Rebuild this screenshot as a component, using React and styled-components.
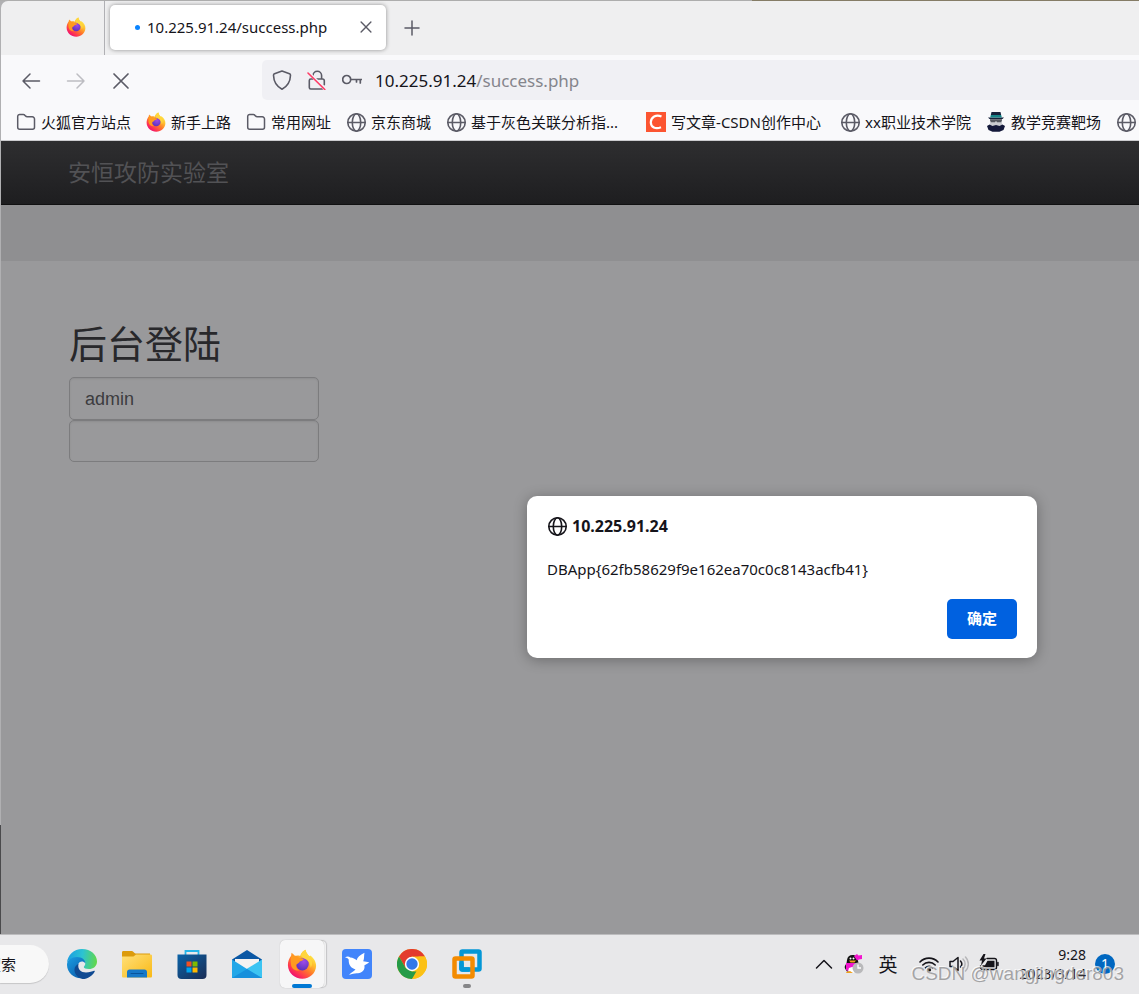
import React, { useId } from 'react';
import styled, { createGlobalStyle } from 'styled-components';

const GlobalStyle = createGlobalStyle`
  :root {
    --font-ui: "Noto Sans", "Noto Sans CJK SC", sans-serif;
    --font-page: "Liberation Sans", "Noto Sans CJK SC", sans-serif;
    --color-ink: #15141a;
    --color-icon: #5b5b66;
    --color-toolbar: #f9f9fb;
  }

  * {
    box-sizing: border-box;
  }

  body {
    margin: 0;
    font-family: var(--font-ui);
    font-size: 15px;
    color: var(--color-ink);
  }

  button,
  input {
    font-family: inherit;
    font-size: inherit;
    color: inherit;
  }

  svg {
    display: block;
    flex: none;
  }
`;

/* the windows behind show through the 1px transparent window border */
const Desktop = styled.div`
  display: flex;
  flex-direction: column;
  height: 100vh;
  overflow: hidden;
  background:
    linear-gradient(90deg, #adadad 66%, #857c66 66%) top / 100% 1px no-repeat,
    linear-gradient(#b0b0b2 83%, #4a4a4c 83%);
`;

const BrowserWindow = styled.div`
  flex: 1;
  display: flex;
  flex-direction: column;
  min-height: 0;
  border-top: 1px solid transparent;
  border-left: 1px solid transparent;
  border-top-left-radius: 8px;
  overflow: hidden;
`;

const TabBar = styled.div`
  display: flex;
  height: 54px;
  background: #efeff0;
`;

const PinnedTab = styled.button`
  display: flex;
  align-items: center;
  justify-content: flex-end;
  width: 104px;
  padding: 0 18px 2px 0;
  border: 0;
  border-right: 1px solid #b0b0b4;
  background: none;
`;

const Tab = styled.div`
  display: flex;
  align-items: center;
  width: 276px;
  margin: 4px 5px 5px;
  padding: 0 12px 1px 25px;
  border-radius: 5px;
  background: #fff;
  box-shadow: 0 0 4px rgba(0, 0, 0, 0.4);
`;

const LoadingDot = styled.span`
  width: 5px;
  height: 5px;
  margin-right: 7px;
  border-radius: 50%;
  background: #0a84ff;
`;

const TabTitle = styled.span`
  flex: 1;
  white-space: nowrap;
`;

const IconButton = styled.button`
  display: flex;
  align-items: center;
  justify-content: center;
  width: ${props => props.$size || 40}px;
  padding: 0;
  border: 0;
  background: none;
  color: ${props => (props.disabled ? '#bdbdc2' : 'var(--color-icon)')};
`;

const NavBar = styled.div`
  display: flex;
  height: 50px;
  padding: 5px 0 5px 10px;
  background: var(--color-toolbar);
`;

const NavButtons = styled.div`
  display: flex;
  gap: 5px;
  width: 251px;
  padding-top: 2px;
`;

const UrlBar = styled.div`
  flex: 1;
  display: flex;
  align-items: center;
  gap: 15px;
  padding-left: 10px;
  border-radius: 5px 0 0 5px;
  background: #f0f0f4;
  color: var(--color-icon);
`;

const UrlText = styled.div`
  margin-left: -2px;
  font-size: 17px;
  color: #85858c;

  strong {
    font-weight: 400;
    color: var(--color-ink);
  }
`;

const Bookmarks = styled.nav`
  display: flex;
  gap: 15px;
  height: 36px;
  padding: 0 0 2px 15px;
  border-bottom: 1px solid #cccccf;
  background: var(--color-toolbar);
  overflow: hidden;
`;

const Bookmark = styled.a`
  flex: none;
  display: flex;
  align-items: center;
  gap: 5px;
  min-width: ${props => props.$width || 0}px;
  color: var(--color-ink);
  text-decoration: none;
  white-space: nowrap;

  svg {
    color: var(--color-icon);
  }
`;

const Page = styled.main`
  position: relative;
  flex: 1;
  background: #99999b;
  font-family: var(--font-page);
`;

const SiteHeader = styled.header`
  display: flex;
  align-items: center;
  height: 64px;
  padding: 0 67px 4px;
  border-bottom: 1px solid #111112;
  background: linear-gradient(#2e2e30, #1e1e20);
`;

const Brand = styled.a`
  font-size: 23px;
  color: #525255;
  text-decoration: none;
`;

const SubHeader = styled.div`
  height: 56px;
  background: #8f8f91;
`;

const LoginForm = styled.form`
  display: flex;
  flex-direction: column;
  align-items: flex-start;
  padding: 55px 68px;
`;

const LoginTitle = styled.h1`
  margin: 0 0 2px;
  font-size: 38px;
  font-weight: 400;
  line-height: 59px;
  color: #28282b;
`;

const LoginInput = styled.input`
  width: 250px;
  height: ${props => props.$height || 42}px;
  padding: 2px 15px 0;
  border: 1px solid #7c7c7e;
  border-radius: 5px;
  outline: 0;
  background: #99999b;
  box-shadow: inset 0 1px 2px rgba(0, 0, 0, 0.08);
  font-size: 18px;
  color: #3c3c3f;
`;

const DialogLayer = styled.div`
  position: absolute;
  inset: 0;
  display: flex;
  align-items: flex-start;
  justify-content: flex-end;
  padding: 355px 102px 0 0;
`;

const Dialog = styled.div`
  width: 510px;
  padding: 18px 20px 19px;
  border-radius: 10px;
  background: #fff;
  box-shadow: 0 2px 14px rgba(0, 0, 0, 0.3);
  font-family: var(--font-ui);
`;

const DialogTitle = styled.h2`
  display: flex;
  align-items: center;
  gap: 5px;
  margin: 0;
  font-size: 16px;
  line-height: 24px;
`;

const DialogMessage = styled.p`
  margin: 19px 0 18px;
  line-height: 24px;
`;

const DialogActions = styled.div`
  display: flex;
  justify-content: flex-end;
`;

const PrimaryButton = styled.button`
  width: 70px;
  height: 40px;
  padding: 0 0 4px;
  border: 0;
  border-radius: 5px;
  background: #0061e0;
  color: #fff;
  font-weight: 700;
`;

const Taskbar = styled.footer`
  position: relative;
  display: flex;
  align-items: center;
  height: 60px;
  padding-bottom: 2px;
  border-top: 1px solid #bcbcbe;
  background: #e8e8ea;
`;

const SearchPill = styled.button`
  display: flex;
  justify-content: flex-end;
  align-items: center;
  width: 49px;
  height: 38px;
  margin-right: 11px;
  padding: 0 33px 0 0;
  border: 0;
  border-radius: 0 19px 19px 0;
  background: #f8f8f8;
  box-shadow: 0 1px 1px rgba(0, 0, 0, 0.15);
  overflow: hidden;
  white-space: nowrap;
`;

const TaskList = styled.div`
  flex: 1;
  display: flex;
  gap: 11px;
`;

const TaskButton = styled.button`
  position: relative;
  display: flex;
  align-items: center;
  justify-content: center;
  width: 44px;
  height: 48px;
  padding: 0;
  border: 0;
  border-radius: 5px;
  background: ${props => (props.$active ? '#f6f6f7' : 'none')};
  box-shadow: ${props => (props.$active ? '0 0 1px #aaa, 3px 0 0 -1px #f0f0f1, 3px 0 1px #c4c4c6' : 'none')};

  &::after {
    content: "";
    display: ${props => (props.$active || props.$open ? 'block' : 'none')};
    position: absolute;
    bottom: 0;
    width: ${props => (props.$active ? 20 : 8)}px;
    height: 4px;
    border-radius: 2px;
    background: ${props => (props.$active ? '#0078d4' : '#868688')};
  }
`;

const Tray = styled.div`
  display: flex;
  align-items: center;
  padding-right: 24px;
`;

const TrayIcons = styled.div`
  display: flex;
  align-items: center;
  gap: 10px;
  margin-right: 21px;
`;

const InputMode = styled.span`
  margin: 0 11px 0 5px;
  font-size: 19px;
`;

const Clock = styled.time`
  margin-right: 9px;
  font-size: 14px;
  line-height: 19px;
  text-align: right;
`;

const NoticeBadge = styled.span`
  width: 20px;
  height: 20px;
  border-radius: 50%;
  background: #0067c0;
  color: #fff;
  font-size: 14px;
  line-height: 20px;
  text-align: center;
`;

const Watermark = styled.span`
  position: absolute;
  right: 15px;
  bottom: 8px;
  font-family: var(--font-page);
  font-size: 19px;
  line-height: 24px;
  color: rgba(150, 150, 152, 0.85);
  text-shadow: -1px -1px 0 rgba(255, 255, 255, 0.7);
`;

const Line = ({ size = 20, children, stroke = 1.5 }) => (
  <svg
    width={size}
    height={size}
    viewBox="0 0 20 20"
    fill="none"
    stroke="currentColor"
    strokeWidth={stroke}
    strokeLinecap="round"
    strokeLinejoin="round"
    aria-hidden="true"
  >
    {children}
  </svg>
);

const GlobeIcon = () => (
  <Line stroke={1.6}>
    <circle cx="10.5" cy="10.5" r="8.7" />
    <ellipse cx="10.5" cy="10.5" rx="4.2" ry="8.7" />
    <path d="M1.8 10.5h17.4" />
  </Line>
);

const FolderIcon = () => (
  <Line>
    <path d="M1.7 4.5a2 2 0 0 1 2-2h3.6c1 0 1.4.5 2 1.2.6.8 1 1.1 2 1.1h5a2.2 2.2 0 0 1 2.2 2.2v8.3a2 2 0 0 1-2 2H3.700a2 2 0 0 1-2-2z" />
  </Line>
);

const FirefoxIcon = ({ size = 20 }) => {
  const id = useId();
  return (
    <svg width={size} height={size} viewBox="0 0 40 40" aria-hidden="true">
      <defs>
        <linearGradient id={`${id}body`} x1="0.85" y1="0.1" x2="0.2" y2="0.95">
          <stop offset="0" stopColor="#fff44f" />
          <stop offset="0.3" stopColor="#ffbd2e" />
          <stop offset="0.55" stopColor="#ff7a2a" />
          <stop offset="0.8" stopColor="#ff3750" />
          <stop offset="1" stopColor="#eb0878" />
        </linearGradient>
        <radialGradient id={`${id}core`} cx="0.6" cy="0.3" r="0.8">
          <stop offset="0" stopColor="#a04be8" />
          <stop offset="1" stopColor="#5130b8" />
        </radialGradient>
      </defs>
      <path
        fill={`url(#${id}body)`}
        d="M25 1c0 3 2 5.500 4.500 8.500l1.500-1c5 3.500 8 9 7.800 14C38.500 32 30.500 39.500 20.500 39.500S1.500 32 1.200 21.500C1.100 16.500 3 12 5.500 9l.5-4c2 1.200 3.500 2.700 4.500 4.500 2-1 5-1 7-.2C18.500 5.500 21.500 2 25 1z"
      />
      <circle cx="20.500" cy="20" r="8.500" fill={`url(#${id}core)`} />
      <path
        fill="#ff9a1f"
        d="M5.500 9.500c4-1.500 8-.5 10.500 2.500 2.500.2 5 .2 6.500 1-.5 2-3 3-5.500 3.700-.5 2.300-3.500 2.500-4.500 4.300-1 2.500.5 6 4 7.500-5 1-10-2-11-7-.7-4-.8-8.500 0-12z"
      />
      <path
        fill="#ffd53d"
        d="M25 1c0 3 2 5.500 5 9 4 4.500 4.500 11 1.500 15-.2-6-2.500-10.500-8.500-12.500-2.500-1-4-2.500-4.500-4C19.500 5 22 2 25 1z"
      />
    </svg>
  );
};

const ArrowIcon = ({ flipped }) => (
  <Line>
    {flipped
      ? <path d="M1.500 10h16.500M11 3l7 7-7 7" />
      : <path d="M18.500 10H2M9 3l-7 7 7 7" />}
  </Line>
);

const CrossIcon = ({ size = 20 }) => (
  <Line size={size} stroke={size < 20 ? 2 : 1.7}>
    <path d="M3 3l14 14M17 3L3 17" />
  </Line>
);

const ShieldIcon = () => (
  <Line stroke={1.6}>
    <path d="M10 1l7.500 2.700c.8.300 1 .8 1 1.500-.2 6.300-2.500 10.800-8.500 14C4 16 1.700 11.500 1.500 5.200c0-.7.2-1.200 1-1.500z" />
  </Line>
);

const BrokenLockIcon = () => (
  <Line stroke={1.6}>
    <path d="M6 9V5.500a4.300 4.300 0 0 1 8.600 0V9M5 9H3.800a1.500 1.500 0 0 0-1.500 1.500v7a1.500 1.500 0 0 0 1.500 1.500h11.500M9.500 9h6a1.800 1.800 0 0 1 1.800 1.800v4" />
    <path d="M1.500 2.500l16.500 16.500" stroke="#f0f0f4" strokeWidth="3" />
    <path d="M1 3l16.800 16.500" stroke="#ff3b66" />
  </Line>
);

const KeyIcon = () => (
  <Line stroke={1.7}>
    <circle cx="4.700" cy="9.500" r="4" />
    <path d="M8.700 9.500H19.500M14.500 9.500v2.500M18.300 9.500v3.500" />
  </Line>
);

const CsdnIcon = () => (
  <svg width="20" height="20" viewBox="0 0 20 20" aria-hidden="true">
    <path fill="#fc5531" d="M0 0h20v20H0z" />
    <path d="M15.500 4.500C10 2.200 5 5 4.800 10.200c0 5 4.700 7.300 10.200 5" fill="none" stroke="#fff" strokeWidth="2.200" />
  </svg>
);

const AgentIcon = () => (
  <svg width="20" height="20" viewBox="0 0 20 20" aria-hidden="true">
    <path fill="#16213a" d="M5.500 0h9l.7 3H4.800zM2 5.500h16L16.500 7h-13z" />
    <path fill="#158487" d="M4.800 3h10.400l.6 2.500H4.200z" />
    <path fill="#c9cbd0" d="M4 7h12v7H4z" />
    <path fill="#53575f" d="M4 7.200h12v1l-1 2h-4l-1-1.500-1 1.500H5L4 8.200z" />
    <path fill="#14193a" d="M1 14l2.500-1.500 3 1.500 3.500-1 3.500 1 3-1.500L19 14l-1.500 4-4 1.700h-7L2.500 18z" />
  </svg>
);

const EdgeIcon = () => (
  <svg width="30" height="30" viewBox="0 0 30 30" aria-hidden="true">
    <defs>
      <linearGradient id="edgeTop" x1="0" y1="0.4" x2="1" y2="0.5">
        <stop offset="0" stopColor="#1b9de2" />
        <stop offset="0.5" stopColor="#2cc3d2" />
        <stop offset="1" stopColor="#62d84a" />
      </linearGradient>
      <linearGradient id="edgeLeft" x1="0" y1="0" x2="0.8" y2="1">
        <stop offset="0" stopColor="#1b9de2" />
        <stop offset="1" stopColor="#0b5cab" />
      </linearGradient>
    </defs>
    <path fill="url(#edgeTop)" d="M0 14C.5 6 7 0 15 0c9 0 15 6 15 12.500 0 5-4 7.500-8 7.500-3.500 0-5.200-1-5.200-2 0-.8 1.500-1.300 1.500-3.500 0-3-3.500-5.500-8-5.500C5 9 1 11 0 14z" />
    <path fill="url(#edgeLeft)" d="M0 15.500C.2 11 4.500 8 10 8c5 0 8.500 3 8.300 6.500-2-3-6.300-2.500-7.300 1.500-1.300 5.500 2 10.500 8 12.300C10 32-.2 25 0 15.500z" />
    <path fill="#104a92" d="M11.500 15c-1.200 5 2.500 8.500 7.500 8.500 3.500 0 6.500-1.500 8-1.800.7-.2 1 .3.600 1C25.500 26.500 21 30 15.500 30 10 28.500 7 24 7.500 20c.3-2.500 2-4 4-5z" />
  </svg>
);

const ExplorerIcon = () => (
  <svg width="30" height="30" viewBox="0 0 30 30" aria-hidden="true">
    <defs>
      <linearGradient id="folderFront" x1="0" y1="0" x2="1" y2="1">
        <stop offset="0" stopColor="#ffe07a" />
        <stop offset="1" stopColor="#f9b916" />
      </linearGradient>
    </defs>
    <path fill="#dc9b0c" d="M0 3.500C0 2.500.5 2 1.500 2H10c1.500 0 2 2.500 3.500 2.500H28v5H0z" />
    <path fill="url(#folderFront)" d="M0 7.500h11.500l2.500-2h14.500c1 0 1.500.5 1.500 1.500v20c0 1-.5 1.500-1.500 1.500h-27C.5 28.500 0 28 0 27z" />
    <path fill="#1678c8" d="M5 28.500V23c0-1.500 1-2.500 2.500-2.500h15c1.500 0 2.500 1 2.500 2.500v5.500z" />
    <path d="M9 24.500h12" stroke="#07549c" strokeLinecap="round" />
  </svg>
);

const StoreIcon = () => (
  <svg width="30" height="30" viewBox="0 0 30 30" aria-hidden="true">
    <defs>
      <linearGradient id="storeBag" x1="0" y1="0" x2="1" y2="1">
        <stop offset="0" stopColor="#0a63a8" />
        <stop offset="1" stopColor="#1a2c55" />
      </linearGradient>
    </defs>
    <path d="M8.500 6.500V2h13v4.500" fill="none" stroke="#25b4e8" strokeWidth="1.800" />
    <path fill="url(#storeBag)" d="M.5 5.500h29V26a4 4 0 0 1-4 4h-21a4 4 0 0 1-4-4z" />
    <path fill="#f25022" d="M9.500 12.500h5v5h-5z" />
    <path fill="#7fba00" d="M15.500 12.500h5v5h-5z" />
    <path fill="#00a4ef" d="M9.500 18.500h5v5h-5z" />
    <path fill="#ffb900" d="M15.500 18.500h5v5h-5z" />
  </svg>
);

const MailIcon = () => (
  <svg width="30" height="30" viewBox="0 0 30 30" aria-hidden="true">
    <path fill="#0b58a5" d="M0 10.500L15 1l15 9.500v4H0z" />
    <path fill="#f6f3f1" d="M3 10h24v10H3z" />
    <path fill="#3cc4f2" d="M30 10.500L12 21.500 25 29h5z" />
    <path fill="#22a7e8" d="M0 10.500l15 9.500L30 29H0z" />
    <path fill="#1790dc" d="M0 29l15-9 15 9z" />
  </svg>
);

const BirdIcon = () => (
  <svg width="30" height="30" viewBox="0 0 30 30" aria-hidden="true">
    <rect width="30" height="30" rx="4" fill="#4285fb" />
    <path
      fill="#fff"
      d="M3 8.500c2-1.300 3.800-1.200 5.300 0 2.700.3 4.700 1.200 6.400 2.800C15 8.500 18 6 22.500 3.800c-.7 3.200 0 5.700-1.300 8.400l6 1.100c-1.500 1.700-3.500 2.200-4.900 3.200 1.200 4-2.300 7.500-6.300 7.800-3-.3-5.500.5-9 1.700 2-2.500 5-4 6.500-5.500C9 19 6.500 16 6.700 10.500 6 9.300 4.500 8.700 3 8.500z"
    />
  </svg>
);

const ChromeIcon = () => (
  <svg width="30" height="30" viewBox="0 0 30 30" aria-hidden="true">
    <circle cx="15" cy="15" r="15" fill="#fbc116" />
    <path fill="#e33b2e" d="M2 7.500A15 15 0 0 1 28 7.500H15L8.500 18.700z" />
    <path fill="#259b48" d="M2 7.500l6.500 11.200L15 22.500h6.500L15 30A15 15 0 0 1 2 7.500z" />
    <path fill="#fbc116" d="M28 7.500A15 15 0 0 1 15 30l6.500-11.200V7.500z" />
    <circle cx="15" cy="15" r="7.200" fill="#fff" />
    <circle cx="15" cy="15" r="5.700" fill="#3478e8" />
  </svg>
);

const VmIcon = () => (
  <svg width="30" height="30" viewBox="0 0 30 30" fill="none" strokeWidth="4.500" aria-hidden="true">
    <rect x="9.500" y="2.500" width="18" height="18" rx="1" stroke="#0497d6" />
    <rect x="2.500" y="9.500" width="18" height="18" rx="1" stroke="#f38b00" />
    <path d="M9.500 13.500v6a1 1 0 0 0 1 1h7" stroke="#0497d6" />
  </svg>
);

const PenguinIcon = () => (
  <svg width="20" height="20" viewBox="0 0 20 20" aria-hidden="true">
    <path fill="#111" d="M3 6c.5-3.500 2.500-5 5.500-5S14 3 14 6.500l1 6-2 5H3l-2-3c-1-2 .5-4 1.500-5z" />
    <ellipse cx="8" cy="14.500" rx="4.500" ry="4.500" fill="#fff" />
    <path fill="#f215ce" d="M2 9h12v3l-6 1-3 1-1 3-2-1zM10 2l3-2 1.500 1.500L18 1v4l-3 .5-2 1z" />
    <path fill="#f2a11c" d="M5 6.500h7l-1.500 2h-4zM2 18l4-1 3 2H2.500z" />
    <circle cx="6.500" cy="4.500" r="1" fill="#fff" />
    <circle cx="9.500" cy="4.500" r="1" fill="#fff" />
    <circle cx="14" cy="14" r="5.500" fill="#b9b9bb" />
    <path d="M14 10.500V14h3" fill="none" stroke="#fff" strokeWidth="1.300" />
  </svg>
);

const WifiIcon = () => (
  <Line stroke={1.6}>
    <path d="M1 8a12.500 12.500 0 0 1 18 0M3.800 11a8.700 8.700 0 0 1 12.400 0M6.500 13.800a5 5 0 0 1 7 0" />
    <circle cx="10" cy="16" r="1.300" fill="currentColor" />
  </Line>
);

const SpeakerIcon = () => (
  <Line stroke={1.5}>
    <path d="M1 7.500h3L9 3.500v13l-5-4H1zM11.500 7a4.500 4.500 0 0 1 0 6" />
    <path d="M14 5a7 7 0 0 1 0 10M16.500 3a10 10 0 0 1 0 14" stroke="#b5b5b8" />
  </Line>
);

const BatteryIcon = () => (
  <Line stroke={1.4}>
    <path d="M8 4.500h7.500a2 2 0 0 1 2 2v7a2 2 0 0 1-2 2h-12a2 2 0 0 1-2-2V12M19 8.500v3" />
    <path d="M8.500 6.700h7v6.600h-12v-2h2.500z" fill="currentColor" stroke="none" />
    <path d="M4.500 0L.5 6.500h2.500L2 11.500 7.500 4.500H5L6.500 0z" fill="currentColor" stroke="none" />
  </Line>
);

const bookmarks = [
  { name: '火狐官方站点', icon: FolderIcon },
  { name: '新手上路', icon: FirefoxIcon },
  { name: '常用网址', icon: FolderIcon },
  { name: '京东商城', icon: GlobeIcon },
  { name: '基于灰色关联分析指...', icon: GlobeIcon, width: 185 },
  { name: '写文章-CSDN创作中心', icon: CsdnIcon, width: 179 },
  { name: 'xx职业技术学院', icon: GlobeIcon },
  { name: '教学竞赛靶场', icon: AgentIcon },
  { name: '', icon: GlobeIcon },
];

const tasks = [
  { name: 'Edge', icon: EdgeIcon },
  { name: 'Explorer', icon: ExplorerIcon },
  { name: 'Store', icon: StoreIcon },
  { name: 'Mail', icon: MailIcon },
  { name: 'Firefox', icon: FirefoxIcon, active: true },
  { name: 'Bird', icon: BirdIcon },
  { name: 'Chrome', icon: ChromeIcon },
  { name: 'VMware', icon: VmIcon, open: true },
];

const BrowserChrome = () => (
  <>
    <TabBar>
      <PinnedTab aria-label="Firefox">
        <FirefoxIcon />
      </PinnedTab>
      <Tab>
        <LoadingDot />
        <TabTitle>10.225.91.24/success.php</TabTitle>
        <IconButton $size={16} aria-label="Close tab">
          <CrossIcon size={14} />
        </IconButton>
      </Tab>
      <IconButton $size={42} aria-label="New tab">
        <Line>
          <path d="M10 3v14M3 10h14" />
        </Line>
      </IconButton>
    </TabBar>
    <NavBar>
      <NavButtons>
        <IconButton aria-label="Back"><ArrowIcon /></IconButton>
        <IconButton aria-label="Forward" disabled><ArrowIcon flipped /></IconButton>
        <IconButton aria-label="Stop"><CrossIcon /></IconButton>
      </NavButtons>
      <UrlBar>
        <ShieldIcon />
        <BrokenLockIcon />
        <KeyIcon />
        <UrlText><strong>10.225.91.24</strong>/success.php</UrlText>
      </UrlBar>
    </NavBar>
    <Bookmarks>
      {bookmarks.map(({ name, icon: Icon, width }, index) => (
        <Bookmark key={index} href="#" $width={width} aria-label={name || 'Bookmark'}>
          <Icon />
          {name}
        </Bookmark>
      ))}
    </Bookmarks>
  </>
);

const App = () => (
  <Desktop>
    <GlobalStyle />
    <BrowserWindow>
      <BrowserChrome />
      <Page>
        <SiteHeader>
          <Brand href="#">安恒攻防实验室</Brand>
        </SiteHeader>
        <SubHeader />
        <LoginForm>
          <LoginTitle>后台登陆</LoginTitle>
          <LoginInput type="text" defaultValue="admin" $height={43} aria-label="Username" />
          <LoginInput type="password" aria-label="Password" />
        </LoginForm>
        <DialogLayer>
          <Dialog role="alertdialog" aria-labelledby="dialog-title">
            <DialogTitle id="dialog-title">
              <GlobeIcon />
              10.225.91.24
            </DialogTitle>
            <DialogMessage>{'DBApp{62fb58629f9e162ea70c0c8143acfb41}'}</DialogMessage>
            <DialogActions>
              <PrimaryButton>确定</PrimaryButton>
            </DialogActions>
          </Dialog>
        </DialogLayer>
      </Page>
    </BrowserWindow>
    <Taskbar>
      <SearchPill>搜索</SearchPill>
      <TaskList>
        {tasks.map(({ name, icon: Icon, active, open }) => (
          <TaskButton key={name} $active={active} $open={open} aria-label={name}>
            <Icon size={30} />
          </TaskButton>
        ))}
      </TaskList>
      <Tray>
        <TrayIcons>
          <Line>
            <path d="M2.500 14L10 6.500l7.500 7.500" />
          </Line>
          <PenguinIcon />
          <InputMode>英</InputMode>
          <WifiIcon />
          <SpeakerIcon />
          <BatteryIcon />
        </TrayIcons>
        <Clock>
          9:28
          <br />
          2023/3/14
        </Clock>
        <NoticeBadge>1</NoticeBadge>
      </Tray>
      <Watermark>CSDN @wangjingder803</Watermark>
    </Taskbar>
  </Desktop>
);

export default App;
